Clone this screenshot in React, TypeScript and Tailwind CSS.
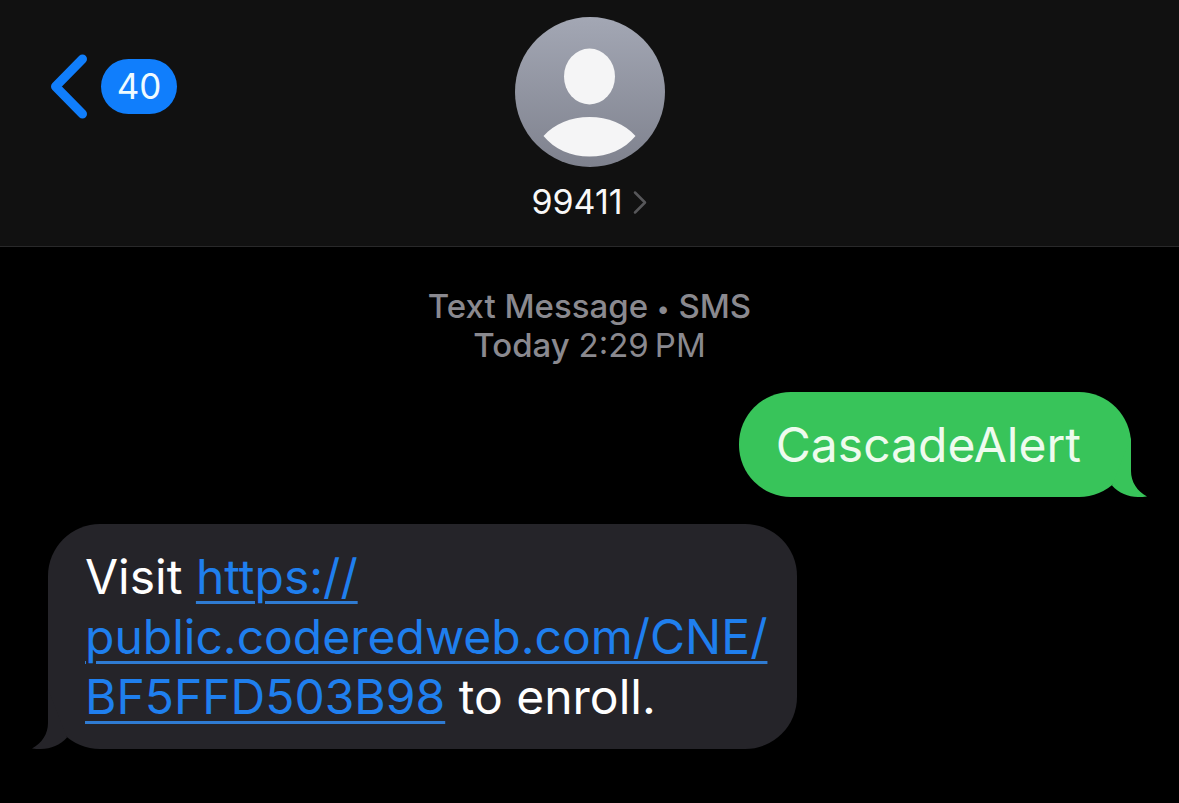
import type { ReactNode } from "react";

function Tail({ className }: { className: string }) {
  return (
    <svg aria-hidden="true" viewBox="0 0 40 60" className={`absolute bottom-0 h-[60px] w-10 ${className}`} fill="currentColor">
      <path d="M24 0V34C24 45 30 54 40 59.500C37 60 34 60 31 60C21 60 12 56 5 48.500Z" />
    </svg>
  );
}

function Bubble({ sent, children }: { sent?: boolean; children: ReactNode }) {
  return (
    <div
      className={
        sent
          ? "relative self-end rounded-[52px] bg-[#38c45a] pt-[23px] pr-[50px] pb-[22px] pl-[37px] text-[#38c45a]"
          : "relative self-start rounded-[52px] bg-[#252429] pt-[23px] pr-[30px] pb-[22px] pl-[37px] text-[#252429]"
      }
    >
      <Tail className={sent ? "-right-4" : "-left-4 -scale-x-100"} />
      <p className={sent ? "relative text-[48px] leading-[60px] text-[#eefbee]" : "relative text-[48px] leading-[60px] text-white"}>
        {children}
      </p>
    </div>
  );
}

function Avatar() {
  return (
    <svg aria-hidden="true" viewBox="0 0 150 150" className="size-[150px]">
      <defs>
        <linearGradient id="avatar" x1="0" y1="0" x2="0" y2="1">
          <stop offset="0" stopColor="#a3a7b4" />
          <stop offset="1" stopColor="#7f828e" />
        </linearGradient>
      </defs>
      <circle cx="75" cy="75" r="75" fill="url(#avatar)" />
      <ellipse cx="74.500" cy="59.500" rx="25.500" ry="28" fill="#f5f5f6" />
      <path d="M28.500 119C39 107 56 100 74.500 100C93 100 110 107 120.500 119C110 132 93 139.500 74.500 139.500C56 139.500 39 132 28.500 119Z" fill="#f5f5f6" />
    </svg>
  );
}

export default function App() {
  return (
    <div className="flex min-h-screen flex-col bg-black font-['Inter',sans-serif]">
      <header className="grid grid-cols-[1fr_auto_1fr] items-start border-b border-[#29292a] bg-[#111111] px-12 pt-[17px] pb-[25px]">
        <button type="button" aria-label="Back, 40 unread" className="mt-9 flex items-center gap-3 justify-self-start">
          <svg aria-hidden="true" viewBox="0 0 41 66" className="h-[66px] w-[41px]" fill="none" stroke="#107efc" strokeWidth="9" strokeLinecap="round" strokeLinejoin="round">
            <path d="M34.500 6L7.500 33.500L34.500 61" />
          </svg>
          <span className="flex h-[55px] w-[76px] items-center justify-center rounded-full bg-[#107efc] text-[35px] leading-10 text-[#f0fbff]">
            40
          </span>
        </button>
        <button type="button" className="flex flex-col items-center gap-4">
          <Avatar />
          <span className="flex items-center gap-[9px] text-[34px] leading-[38px] text-[#f8f8f8]">
            99411
            <svg aria-hidden="true" viewBox="0 0 16 26" className="h-[26px] w-4" fill="none" stroke="#57575a" strokeWidth="2.5" strokeLinecap="round" strokeLinejoin="round">
              <path d="M3 3.500L13 13.500L3 23.500" />
            </svg>
          </span>
        </button>
      </header>

      <main className="flex flex-col gap-[27px] px-12 pt-10 pb-10">
        <p className="text-center text-[33px] leading-[39px] font-medium text-[#8a898f]">
          Text Message <span className="align-middle text-[24px] leading-none">•</span> SMS
          <br />
          Today <span className="font-normal">2:29&#8239;PM</span>
        </p>
        <Bubble sent>CascadeAlert</Bubble>
        <Bubble>
          Visit{" "}
          <a
            href="https://public.coderedweb.com/CNE/BF5FFD503B98"
            className="text-[#1f7fee] underline decoration-[#2f7bd2] decoration-[3px] underline-offset-[7px]"
          >
            https://
            <br />
            public.coderedweb.com/CNE/
            <br />
            BF5FFD503B98
          </a>{" "}
          to enroll.
        </Bubble>
      </main>
    </div>
  );
}
